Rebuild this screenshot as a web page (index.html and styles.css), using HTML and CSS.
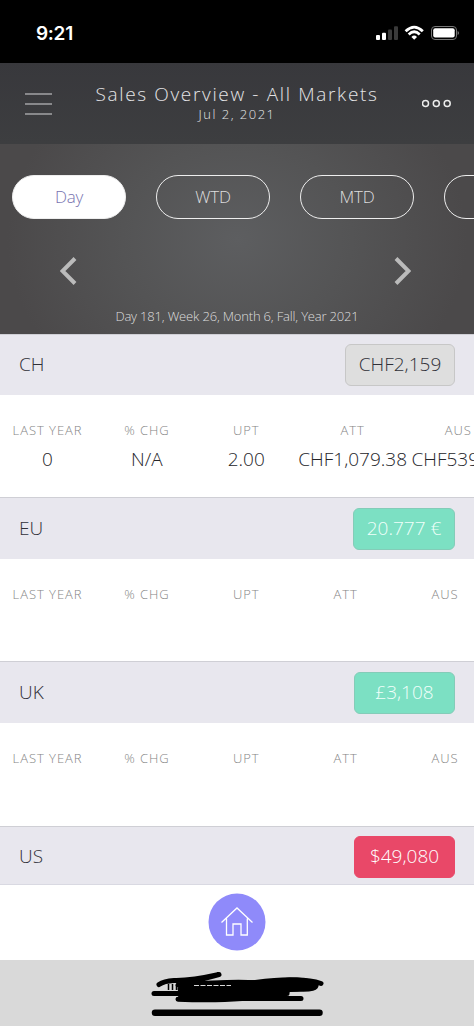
FILE: index.html
```html
<!DOCTYPE html>
<html lang="en">
<head>
<meta charset="utf-8">
<title>Sales Overview</title>
<link rel="stylesheet" href="styles.css">
</head>
<body>
<div class="app">
  <div class="status">
    <span class="clock">9:21</span>
    <svg class="status-icons" width="86" height="18" viewBox="0 0 86 18">
      <g fill="#fff"><rect x="3" y="11" width="4" height="5" rx="1"/><rect x="9" y="8.800" width="4" height="7.200" rx="1"/></g>
      <g fill="#3a3a3a"><rect x="15" y="5.500" width="4" height="10.500" rx="1"/><rect x="21" y="2.300" width="4" height="13.700" rx="1"/></g>
      <g fill="none" stroke="#fff" stroke-width="2.800">
        <path d="M32.600 7.200Q41.200 -1 49.800 7.200"/><path d="M35.700 10.400Q41.200 5.200 46.700 10.400"/>
      </g>
      <path d="M38.400 12.900Q41.200 10.300 44 12.900L41.200 15.800Z" fill="#fff"/>
      <rect x="58.500" y="2.500" width="25" height="13" rx="3.500" fill="none" stroke="#777"/>
      <rect x="60.200" y="4.300" width="21.500" height="9.300" rx="2" fill="#fff"/>
      <path d="M84.600 7V11Q86 10.500 86 9T84.600 7Z" fill="#777"/>
    </svg>
  </div>
  <header class="header">
    <svg class="menu" width="27" height="24" viewBox="0 0 27 24"><path d="M0 2H27M0 12H27M0 22H27" stroke="#a3a3a5" stroke-width="1.500"/></svg>
    <div class="titles">
      <h1 class="title">Sales Overview - All Markets</h1>
      <div class="date">Jul 2, 2021</div>
    </div>
    <svg class="more" width="31" height="10" viewBox="0 0 31 10"><g fill="none" stroke="#ececec" stroke-width="1.500"><circle cx="3.500" cy="4.500" r="3"/><circle cx="14.300" cy="4.500" r="3"/><circle cx="25.200" cy="4.500" r="3"/></g></svg>
  </header>
  <section class="hero">
    <div class="pills">
      <button class="pill active">Day</button>
      <button class="pill">WTD</button>
      <button class="pill">MTD</button>
      <button class="pill"></button>
    </div>
    <div class="arrows">
      <svg width="17" height="28" viewBox="0 0 17 28"><path d="M15 1.500L2.500 14L15 26.500" fill="none" stroke="#bbb" stroke-width="4"/></svg>
      <svg width="17" height="28" viewBox="0 0 17 28"><path d="M2 1.500L14.500 14L2 26.500" fill="none" stroke="#bbb" stroke-width="4"/></svg>
    </div>
    <div class="period">Day 181, Week 26, Month 6, Fall, Year 2021</div>
  </section>
  <main class="markets">
    <section class="market">
      <div class="band"><span class="name">CH</span><span class="badge neutral">CHF2,159</span></div>
      <div class="stats wide">
        <div class="stat"><span class="label">LAST YEAR</span><span class="value">0</span></div>
        <div class="stat"><span class="label">% CHG</span><span class="value">N/A</span></div>
        <div class="stat"><span class="label">UPT</span><span class="value">2.00</span></div>
        <div class="stat"><span class="label">ATT</span><span class="value">CHF1,079.38</span></div>
        <div class="stat"><span class="label">AUS</span><span class="value">CHF539.69</span></div>
      </div>
    </section>
    <section class="market">
      <div class="band"><span class="name">EU</span><span class="badge up euro">20.777 €</span></div>
      <div class="stats">
        <div class="stat"><span class="label">LAST YEAR</span></div>
        <div class="stat"><span class="label">% CHG</span></div>
        <div class="stat"><span class="label">UPT</span></div>
        <div class="stat"><span class="label">ATT</span></div>
        <div class="stat"><span class="label">AUS</span></div>
      </div>
    </section>
    <section class="market">
      <div class="band"><span class="name">UK</span><span class="badge up">£3,108</span></div>
      <div class="stats">
        <div class="stat"><span class="label">LAST YEAR</span></div>
        <div class="stat"><span class="label">% CHG</span></div>
        <div class="stat"><span class="label">UPT</span></div>
        <div class="stat"><span class="label">ATT</span></div>
        <div class="stat"><span class="label">AUS</span></div>
      </div>
    </section>
    <section class="market">
      <div class="band"><span class="name">US</span><span class="badge down">$49,080</span></div>
    </section>
  </main>
  <nav class="tabbar">
    <svg width="58" height="58" viewBox="0 0 58 58"><circle cx="29" cy="29" r="28.500" fill="#8f8afa"/><path d="M13.500 29.500L29 15L44.500 29.500M18.500 25.500V42H25V31H33V42H39.300V25.500" fill="none" stroke="#fff" stroke-width="1.300"/></svg>
  </nav>
  <footer class="footer">
    <svg width="474" height="66" viewBox="0 0 474 66">
      <g fill="none" stroke="#000" stroke-width="5" stroke-linecap="round" stroke-linejoin="round">
        <path d="M159 24.500Q164 21 174 20.500Q190 21 219 14.500Q209 17 190 22.500"/>
        <path d="M154 33.500H287"/><path d="M178 39.200Q215 40.500 242 38.500H301"/>
        <path d="M155 52.800H319.500" stroke-width="6.500"/>
        <path d="M178 25Q250 20 260 24Q300 16 321 23.500"/>
        <path d="M180 29H298Q318 30 316 24"/>
      </g>
      <path d="M180 22L255 20Q300 14 314 21L317 27Q306 32 290 32L284 38H178Z"/>
      <g stroke="#d9d9d9"><path d="M168.500 24V30M172.500 24V30M176.500 25V30" stroke="#000" stroke-width="1.500"/><path d="M194 25.500H231" stroke-width="1.200" stroke-dasharray="5 1.500"/></g>
    </svg>
  </footer>
</div>
</body>
</html>
```
FILE: styles.css
```css
* { box-sizing: border-box; }
body {
  margin: 0;
  font-family: "Open Sans", sans-serif;
  font-weight: 300;
  background: #fff;
}
.app {
  width: 474px;
  height: 1026px;
  display: flex;
  flex-direction: column;
  overflow: hidden;
}
.status {
  flex: 0 0 63px;
  padding: 0 15px 0 36px;
  background: #000;
  display: flex;
  justify-content: space-between;
  align-items: center;
}
.clock {
  padding-top: 4px;
  color: #fff;
  font: 600 19px/24px Inter, sans-serif;
  letter-spacing: -0.3px;
}
.status-icons { margin-top: 2px; }
.header {
  flex: 0 0 81px;
  padding: 0 21px 0 25px;
  background: linear-gradient(#38383c, #3d3e40);
  display: grid;
  grid-template-columns: 27px 1fr 31px;
  align-items: center;
  color: #e4e4e6;
}
.titles { text-align: center; padding-bottom: 2px; }
.title {
  margin: 0;
  font-size: 19px;
  font-weight: 300;
  line-height: 22px;
  letter-spacing: 1.65px;
  white-space: nowrap;
}
.date {
  font-size: 13px;
  line-height: 18px;
  letter-spacing: 1.5px;
}
.hero {
  flex: 0 0 190px;
  overflow: hidden;
  background: radial-gradient(ellipse 230px 190px at 50% 50%, #5d5e60, #545455 50%, #4b494a);
  color: #dedede;
}
.pills {
  display: flex;
  gap: 30px;
  padding: 31px 0 0 12px;
}
.pill {
  flex: 0 0 114px;
  height: 44px;
  padding: 0;
  border: 1.5px solid #eee;
  border-radius: 22px;
  background: transparent;
  color: #dedede;
  font: 300 17px/40px "Open Sans", sans-serif;
  letter-spacing: -0.2px;
}
.pill.active {
  background: #fff;
  color: #7773b0;
}
.arrows {
  display: flex;
  justify-content: space-between;
  padding: 38px 63px 0 60px;
}
.arrows svg { display: block; }
.period {
  margin-top: 21px;
  font-size: 13px;
  line-height: 20px;
  letter-spacing: -0.17px;
  text-align: center;
}
.markets {
  flex: 0 0 550.5px;
  overflow: hidden;
  border-bottom: 1px solid #d9d9e2;
}
.market { height: 164.2px; }
.market:first-child { height: 163.2px; }
.market:first-child .band { height: 61px; }
.band {
  height: 62px;
  padding: 0 19px;
  border-top: 1px solid #cfcfd5;
  background: #e8e7ee;
  display: flex;
  justify-content: space-between;
  align-items: center;
  font-size: 19px;
  color: #303038;
}
.name { padding-bottom: 2px; }
.badge {
  min-width: 101px;
  height: 42px;
  border: 1px solid #c7c7c7;
  border-radius: 6px;
  line-height: 39px;
  text-align: center;
}
.neutral { width: 110px; background: #dedede; }
.euro { width: 102px; }
.up { background: #7ce0c3; border-color: #84ccb8; color: #effffa; }
.down { background: #e94868; border-color: #e94868; color: #fff; }
.stats {
  display: grid;
  grid-template-columns: repeat(5, 99.4px);
  margin-left: -2.2px;
  padding-top: 25px;
}
.stats.wide { grid-template-columns: repeat(3, 99.4px) 113.4px 98px; }
.stat {
  display: flex;
  flex-direction: column;
  align-items: center;
  white-space: nowrap;
}
.label {
  font-size: 13px;
  line-height: 20px;
  letter-spacing: 0.95px;
  color: #858585;
}
.value {
  margin-top: 6px;
  font-size: 19px;
  line-height: 26px;
  color: #25252a;
}
.tabbar {
  flex: 0 0 75.5px;
  display: flex;
  align-items: center;
  justify-content: center;
}
.footer {
  flex: 1;
  background: #d9d9d9;
}
.footer svg { display: block; }
```
